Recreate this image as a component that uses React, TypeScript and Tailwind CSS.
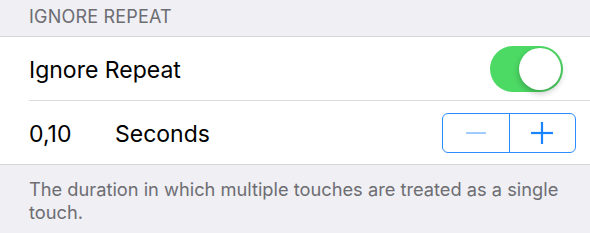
export default function App() {
  return (
    <div
      className="w-[590px] h-[233px] bg-[#efeff4] overflow-hidden"
      style={{ fontFamily: 'Inter, "Noto Sans", sans-serif' }}
    >
      {/* Section header */}
      <div className="h-[36px] flex items-center pl-[29px] pb-[4px] text-[18px] text-[#6d6d72] tracking-[0.2px]">
        IGNORE REPEAT
      </div>

      {/* Cells */}
      <div className="bg-white border-y border-[#d6d6da]">
        <div className="ml-[29px] border-b border-[#dcdce0]">
          <div className="h-[63px] flex items-center justify-between pr-[27px]">
            <span className="text-[23px] text-black pt-[4px]">Ignore Repeat</span>
            <div className="w-[73px] h-[46px] rounded-full bg-[#4cd964] flex items-center justify-end pr-[2px]">
              <div className="w-[42px] h-[42px] rounded-full bg-white shadow-[0_3px_6px_rgba(0,0,0,0.25)]" />
            </div>
          </div>
        </div>
        <div className="h-[63px] flex items-center justify-between pl-[29px] pr-[14px]">
          <div className="flex items-center text-[23px] text-black pt-[4px]">
            <span className="w-[86px]">0,10</span>
            <span>Seconds</span>
          </div>
          <div className="w-[134px] h-[40px] border border-[#2a8cff] rounded-[6px] flex">
            <div className="flex-1 flex items-center justify-center border-r border-[#2a8cff]">
              <svg width="22" height="4" viewBox="0 0 22 4">
                <line x1="1" y1="2" x2="21" y2="2" stroke="#9fcbfd" strokeWidth="2" />
              </svg>
            </div>
            <div className="flex-1 flex items-center justify-center">
              <svg width="24" height="24" viewBox="0 0 24 24">
                <line x1="1" y1="12" x2="23" y2="12" stroke="#1a84ff" strokeWidth="2.2" />
                <line x1="12" y1="1" x2="12" y2="23" stroke="#1a84ff" strokeWidth="2.2" />
              </svg>
            </div>
          </div>
        </div>
      </div>

      {/* Footer */}
      <p className="pl-[29px] pt-[13px] text-[18.25px] leading-[23px] text-[#6d6d72]">
        The duration in which multiple touches are treated as a single
        <br />
        touch.
      </p>
    </div>
  )
}
